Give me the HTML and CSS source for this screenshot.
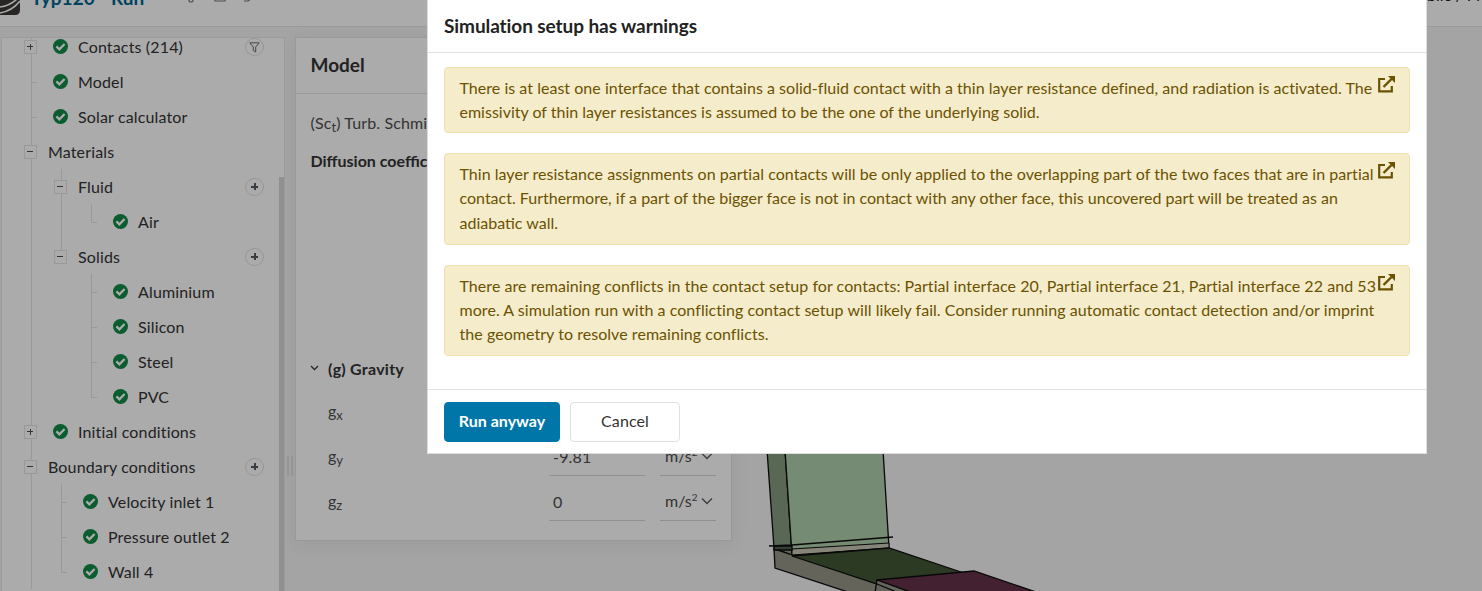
FILE: index.html
```
<!DOCTYPE html>
<html>
  <head>
    <meta charset="utf-8">
    <title>Simulation setup</title>
    <link rel="stylesheet" href="styles.css">
  </head>
  <body>
    <svg class="defs">
      <symbol id="check" viewBox="0 0 15 15">
        <circle cx="7.5" cy="7.5" r="7.5" fill="#0b5c2e"/>
        <path d="M3.4 7.4l3 3 5.2-5.4" fill="none" stroke="#ababab" stroke-width="2.3"/>
      </symbol>
      <symbol id="open" viewBox="0 0 17 17">
        <path d="M7 3H1.2v12.3h12.6V10" fill="none" stroke="#6b5200" stroke-width="2.2"/>
        <path d="M5.5 11L14 2.5" fill="none" stroke="#6b5200" stroke-width="2.4"/>
        <path d="M10 0h7v7z" fill="#6b5200"/>
      </symbol>
      <symbol id="chevron" viewBox="0 0 12 8">
        <path d="M1 1.5l5 5 5-5" fill="none" stroke="#3c3c3c" stroke-width="1.3"/>
      </symbol>
      <symbol id="chevron-small" viewBox="0 0 9 6">
        <path d="M1 1l3.5 3.5L8 1" fill="none" stroke="#2c2c2c" stroke-width="1.4"/>
      </symbol>
    </svg>

    <div class="app">
      <header class="topbar">
        <svg class="logo" width="20" height="30" viewBox="0 0 20 30">
          <path d="M0 0h20v25q0 5-5 5H0z" fill="#292524"/>
          <path d="M0 22Q11 21 20 11M0 28Q12 26 20 16" fill="none" stroke="#ababab" stroke-width="1.6"/>
        </svg>
        <span class="project">Typ120 - Run</span>
        <svg class="tools" width="70" height="20" viewBox="0 0 70 20" fill="none" stroke="#505050" stroke-width="1.2">
          <path d="M2 13v3q0 2 2 2t2-2v-3M28 8v9h10V8M60 17q3 0 3-3M57 17h3"/>
        </svg>
        <span class="visibility">Public / Pr</span>
      </header>

      <div class="workspace">
        <nav class="tree">
          <div class="row"><i class="g"></i><b class="box plus l1"></b><svg class="ok"><use href="#check"/></svg>Contacts (214)<span class="action"><svg width="11" height="11" viewBox="0 0 11 11"><path d="M.8.8h9.4L6.7 5v5L4.3 8.5V5z" fill="none" stroke="#43484c"/></svg></span></div>
          <div class="row"><i class="g tick"></i><svg class="ok"><use href="#check"/></svg>Model</div>
          <div class="row"><i class="g tick"></i><svg class="ok"><use href="#check"/></svg>Solar calculator</div>
          <div class="row"><i class="g"></i><b class="box l1"></b><span class="group">Materials</span></div>
          <div class="row"><i class="g"></i><i class="g"></i><b class="box l2"></b><span class="group">Fluid</span><span class="action add"></span></div>
          <div class="row"><i class="g"></i><i class="g"></i><i class="g tick last"></i><svg class="ok"><use href="#check"/></svg>Air</div>
          <div class="row"><i class="g"></i><i class="g last"></i><b class="box l2"></b><span class="group">Solids</span><span class="action add"></span></div>
          <div class="row"><i class="g"></i><i class="g none"></i><i class="g tick"></i><svg class="ok"><use href="#check"/></svg>Aluminium</div>
          <div class="row"><i class="g"></i><i class="g none"></i><i class="g tick"></i><svg class="ok"><use href="#check"/></svg>Silicon</div>
          <div class="row"><i class="g"></i><i class="g none"></i><i class="g tick"></i><svg class="ok"><use href="#check"/></svg>Steel</div>
          <div class="row"><i class="g"></i><i class="g none"></i><i class="g tick last"></i><svg class="ok"><use href="#check"/></svg>PVC</div>
          <div class="row"><i class="g"></i><b class="box plus l1"></b><svg class="ok"><use href="#check"/></svg>Initial conditions</div>
          <div class="row"><i class="g"></i><b class="box l1"></b><span class="group">Boundary conditions</span><span class="action add"></span></div>
          <div class="row"><i class="g"></i><i class="g tick"></i><svg class="ok"><use href="#check"/></svg>Velocity inlet 1</div>
          <div class="row"><i class="g"></i><i class="g tick"></i><svg class="ok"><use href="#check"/></svg>Pressure outlet 2</div>
          <div class="row"><i class="g"></i><i class="g tick last"></i><svg class="ok"><use href="#check"/></svg>Wall 4</div>
          <div class="scrollbar"></div>
        </nav>
        <div class="grip"></div>

        <section class="panel">
          <h2>Model</h2>
          <div class="prop schmidt">(Sc<sub>t</sub>) Turb. Schmidt number</div>
          <div class="prop strong">Diffusion coefficients</div>
          <div class="gravity"><svg width="9" height="6"><use href="#chevron-small"/></svg>(g) Gravity</div>
          <div class="comp"><label>g<sub>x</sub></label></div>
          <div class="comp"><label>g<sub>y</sub></label><span class="value">-9.81</span><span class="unit">m/s<sup>2</sup><svg width="12" height="8"><use href="#chevron"/></svg></span></div>
          <div class="comp"><label>g<sub>z</sub></label><span class="value">0</span><span class="unit">m/s<sup>2</sup><svg width="12" height="8"><use href="#chevron"/></svg></span></div>
        </section>

        <svg class="viewer" width="320" height="161" viewBox="0 0 320 161" stroke="#080808" stroke-width="1.3">
          <path d="M27 20h18l7 105-18-7z" fill="#596755"/>
          <path d="M45 20h98l6 98-97 7z" fill="#768b73"/>
          <path d="M52 119l97-6v5l-97 7z" fill="#85857a" stroke-width="1"/>
          <path d="M34 119l18 6 85 28-1 10h-25l-76-25z" fill="#65645b"/>
          <path d="M34 116h18v4H34z" fill="#344034"/>
          <path d="M52 126l97-8 75 25-87 11z" fill="#2c3a23"/>
          <path d="M137 150l97-9 65 22H173z" fill="#432131"/>
          <path d="M137 150l36 13h-38z" fill="#65645b"/>
          <path d="M137 154l22 9" fill="none"/>
          <path d="M29 116l23-1 101-8" fill="none" stroke-width="1.7"/>
        </svg>
      </div>
    </div>

    <div class="dialog">
      <h1>Simulation setup has warnings</h1>
      <div class="warnings">
        <div class="warning">There is at least one interface that contains a solid-fluid contact with a thin layer resistance defined, and radiation is activated. The<br>emissivity of thin layer resistances is assumed to be the one of the underlying solid.<svg class="open"><use href="#open"/></svg></div>
        <div class="warning long">Thin layer resistance assignments on partial contacts will be only applied to the overlapping part of the two faces that are in partial<br>contact. Furthermore, if a part of the bigger face is not in contact with any other face, this uncovered part will be treated as an<br>adiabatic wall.<svg class="open"><use href="#open"/></svg></div>
        <div class="warning conflicts">There are remaining conflicts in the contact setup for contacts: Partial interface 20, Partial interface 21, Partial interface 22 and 53<br>more. A simulation run with a conflicting contact setup will likely fail. Consider running automatic contact detection and/or imprint<br>the geometry to resolve remaining conflicts.<svg class="open"><use href="#open"/></svg></div>
      </div>
      <footer>
        <button class="primary">Run anyway</button>
        <button>Cancel</button>
      </footer>
    </div>
  </body>
</html>
```
FILE: styles.css
```
* { box-sizing: border-box; }
body {
  margin: 0;
  height: 591px;
  overflow: hidden;
  background: #a4a4a4;
  color: #222;
  font: 16px/24px Lato, sans-serif;
}
.defs { position: absolute; width: 0; height: 0; }
sub, sup { line-height: 0; }
sub { font-size: 13px; vertical-align: -3px; }
sup { font-size: 10px; vertical-align: 6px; }

.app {
  height: 591px;
  display: flex;
  flex-direction: column;
}
.topbar {
  height: 27px;
  flex: none;
  display: flex;
  align-items: flex-end;
  background: #ababab;
  border-bottom: 1px solid #999;
  overflow: hidden;
}
.logo { margin-bottom: 11px; }
.project {
  margin: 0 0 16px 11px;
  font-size: 19px;
  font-weight: bold;
  color: #00435f;
}
.tools { margin: 0 0 22px 43px; }
.visibility {
  margin: 0 0 19px auto;
  color: #111;
  white-space: nowrap;
}

.workspace {
  flex: 1;
  min-height: 0;
  display: flex;
  align-items: flex-start;
  padding: 10px 0 0 1px;
}

/* simulation tree */
.tree {
  position: relative;
  width: 284px;
  height: 554px;
  flex: none;
  overflow: hidden;
  background: #ababab;
  border: 1px solid #9b9b9b;
  border-bottom: 0;
  padding-left: 13px;
  letter-spacing: .15px;
}
.row {
  position: relative;
  height: 35px;
  display: flex;
  align-items: center;
}
.row:first-child { margin-top: -9px; }
.g {
  position: relative;
  width: 30px;
  height: 35px;
  flex: none;
}
.g::before {
  content: "";
  position: absolute;
  left: 16px;
  top: 0;
  width: 1px;
  height: 35px;
  background: #999;
}
.g.tick::after {
  content: "";
  position: absolute;
  left: 16px;
  top: 18px;
  width: 6px;
  height: 1px;
  background: #999;
}
.g.last::before { height: 19px; }
.g.none::before { display: none; }
.box {
  position: absolute;
  top: 11px;
  width: 13px;
  height: 14px;
  background: #ababab;
  border: 1px solid #999;
}
.box.l1 { left: 9px; }
.box.l2 { left: 39px; }
.box::before, .box.plus::after {
  content: "";
  position: absolute;
  left: 2px;
  top: 5px;
  width: 6px;
  height: 1px;
  background: #333;
}
.box.plus::after {
  left: 5px;
  top: 3px;
  width: 1px;
  height: 6px;
}
.ok {
  width: 15px;
  height: 15px;
  flex: none;
  margin: 0 10px 0 8px;
}
.group { margin-left: 3px; }
.action {
  position: absolute;
  left: 230px;
  top: 9px;
  width: 19px;
  height: 18px;
  border: 1px solid #979797;
  border-radius: 50%;
  display: flex;
  align-items: center;
  justify-content: center;
}
.add::before, .add::after {
  content: "";
  position: absolute;
  left: 5px;
  top: 7px;
  width: 7px;
  height: 1.5px;
  background: #383d41;
}
.add::after {
  left: 8px;
  top: 4px;
  width: 1.5px;
  height: 7px;
}
.scrollbar {
  position: absolute;
  right: 0;
  top: 139px;
  width: 5px;
  height: 420px;
  background: #909090;
}
.grip {
  width: 6px;
  height: 20px;
  flex: none;
  margin: 419px 2px 0;
  border: solid #989898;
  border-width: 0 2px;
}

/* settings */
.panel {
  width: 437px;
  height: 504px;
  flex: none;
  background: #ababab;
  border: 1px solid #999;
  box-shadow: 0 4px 18px rgba(0, 0, 0, .06);
}
.panel h2 {
  margin: 0;
  height: 56px;
  padding: 0 14.5px;
  border-bottom: 1px solid #999;
  font-size: 19px;
  font-weight: bold;
  line-height: 54px;
}
.prop {
  padding-left: 14.5px;
  height: 38px;
  white-space: nowrap;
  overflow: hidden;
}
.schmidt { margin-top: 17px; color: #333; letter-spacing: .12px; }
.strong, .gravity { font-weight: bold; }
.gravity {
  display: flex;
  align-items: center;
  gap: 9px;
  margin-top: 170px;
  padding-left: 14px;
  letter-spacing: .25px;
}
.gravity svg { margin-top: -3px; }
.comp {
  display: flex;
  height: 45px;
  padding-left: 32px;
  color: #333;
}
.gravity + .comp { margin-top: 10px; }
.comp label { width: 221px; padding-top: 8px; }
.comp .value {
  width: 96px;
  height: 40px;
  padding: 9px 4px;
  border-bottom: 1px solid #909090;
  letter-spacing: .2px;
}
.unit {
  width: 56px;
  height: 40px;
  margin-left: 15px;
  padding: 8px 5px;
  border-bottom: 1px solid #909090;
  white-space: nowrap;
}
.unit svg { margin: 0 0 2px 3px; }

.viewer { flex: none; margin: 393px 0 0 8px; }

/* warning dialog */
.dialog {
  position: absolute;
  left: 427px;
  top: 0;
  width: 1000px;
  height: 454px;
  background: #fff;
  border: 1px solid #ddd;
  border-top: 0;
}
.dialog h1 {
  margin: 0;
  height: 53px;
  padding-left: 16px;
  border-bottom: 1px solid #e2e3e3;
  font-size: 19px;
  line-height: 52px;
  letter-spacing: -.08px;
  color: #222;
}
.warnings {
  height: 336px;
  padding: 14px 16px 0;
}
.warning {
  position: relative;
  margin-bottom: 20px;
  padding: 8px 14.5px 7.2px;
  background: #f5eccc;
  border: 1px solid #efe2af;
  border-radius: 4px;
  color: #6b5200;
  line-height: 24.4px;
  white-space: nowrap;
}
.warning::first-line { letter-spacing: .03px; }
.warning.long { padding-bottom: 8.8px; }
.warning.conflicts { padding: 7.6px 14.5px 8.2px; letter-spacing: .05px; }
.warning.conflicts::first-line { letter-spacing: .05px; }
.open {
  position: absolute;
  right: 14px;
  top: 8px;
  width: 17px;
  height: 17px;
}
.dialog footer {
  display: flex;
  gap: 10px;
  padding: 12px 16px;
  border-top: 1px solid #e2e3e3;
}
button {
  width: 110px;
  height: 40px;
  padding: 0 0 3px;
  background: #fff;
  border: 1px solid #dfe0e1;
  border-radius: 4px;
  color: #333;
  font: 16px Lato, sans-serif;
  letter-spacing: .1px;
}
button.primary {
  width: 116px;
  background: #0076a8;
  border-color: #0076a8;
  color: #fff;
  font-weight: bold;
  letter-spacing: 0;
}
```
